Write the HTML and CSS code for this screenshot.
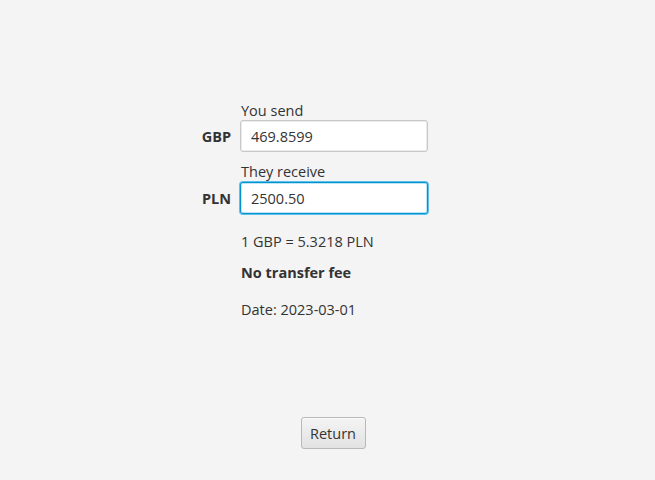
FILE: index.html
```html
<!DOCTYPE html>
<html>
<head>
<meta charset="utf-8">
<link rel="stylesheet" href="styles.css">
</head>
<body>
<main class="page">
  <span class="caption cap-first">You send</span>
  <span class="cur">GBP</span>
  <input class="field" type="text" value="469.8599">
  <span class="caption cap-second">They receive</span>
  <span class="cur">PLN</span>
  <input class="field focused" type="text" value="2500.50">
  <span class="info rate">1 GBP = 5.3218 PLN</span>
  <span class="info fee">No transfer fee</span>
  <span class="info date">Date: 2023-03-01</span>
  <button class="btn" type="button">Return</button>
</main>
</body>
</html>
```
FILE: styles.css
```css
html, body {
  margin: 0;
  padding: 0;
  background: #f4f4f4;
}
body {
  width: 655px;
  height: 480px;
  overflow: hidden;
  font-family: "Open Sans", "Noto Sans", sans-serif;
  font-size: 14.5px;
  color: #333333;
}
.page {
  display: grid;
  grid-template-columns: 231px 188px;
  column-gap: 9px;
  padding-top: 100px;
  align-items: center;
}
.caption, .info {
  grid-column: 2;
  padding-left: 1px;
  line-height: 21px;
  height: 18px;
}
.cap-first { margin-bottom: 2px; }
.cap-second { margin-top: 9px; margin-bottom: 3px; }
.cur {
  grid-column: 1;
  text-align: right;
  font-weight: bold;
  line-height: 18px;
  padding-top: 1px;
}
.field {
  grid-column: 2;
  box-sizing: border-box;
  width: 188px;
  height: 32px;
  margin: 0;
  padding: 0 10px;
  border: 1px solid #c8c8c8;
  border-radius: 3px;
  background: #ffffff;
  box-shadow: inset 0 0 0 1px #ececec;
  font-family: inherit;
  font-size: 14.5px;
  color: #333333;
  outline: none;
}
.field.focused {
  border: 1px solid #0093d0;
  box-shadow: 0 0 0 1px #5cc1ea, inset 0 0 0 1px #bfe4f4;
}
.rate { margin-top: 17px; }
.fee { margin-top: 13px; font-weight: bold; }
.date { margin-top: 19px; }
.btn {
  grid-column: 2;
  justify-self: center;
  margin-top: 100px;
  margin-right: 2px;
  box-sizing: border-box;
  width: 65px;
  height: 32px;
  padding: 0;
  border: 1px solid #b8b8b8;
  border-radius: 3px;
  background: linear-gradient(#f4f4f4, #e2e2e2);
  box-shadow: inset 0 1px 0 #fbfbfb;
  font-family: inherit;
  font-size: 14.5px;
  color: #333333;
}
```
